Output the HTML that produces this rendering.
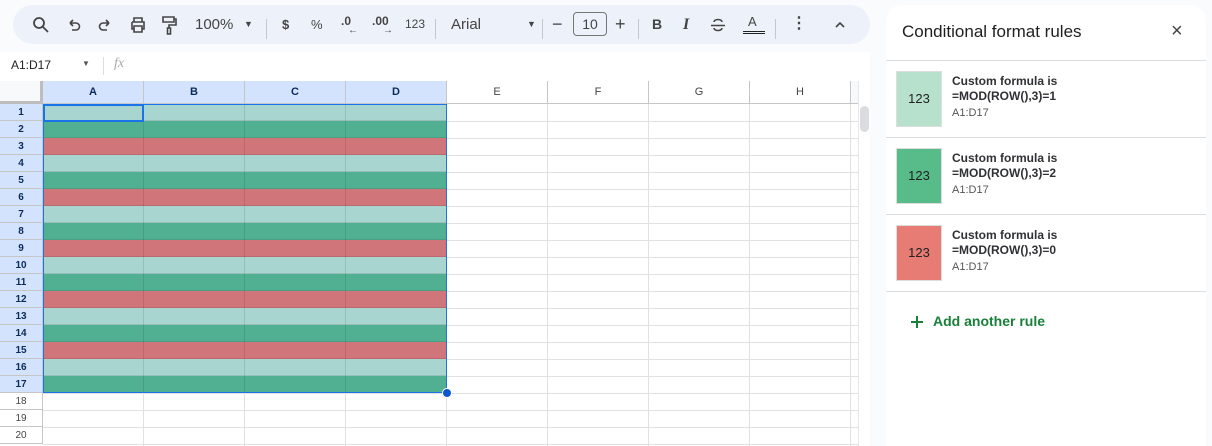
<!DOCTYPE html>
<html><head><meta charset="utf-8"><style>
*{margin:0;padding:0;box-sizing:border-box}
body{width:1212px;height:446px;background:#f9fbfd;font-family:"Liberation Sans",Arial,sans-serif;position:relative;overflow:hidden;color:#444}
.a{position:absolute}
.tb{left:13px;top:5px;width:857px;height:39px;background:#edf2fa;border-radius:20px}
.ti{position:absolute;top:0;height:39px;line-height:39px;font-size:14px;color:#444}
.sep{position:absolute;top:14px;width:1px;height:20px;background:#c7c7c7}
.grid{left:0;top:81px;width:858px;height:365px;background:#fff;overflow:hidden}
.hc{position:absolute;top:0;height:23px;line-height:23px;text-align:center;font-size:11px;border-right:1px solid #c4c7c5;border-bottom:1px solid #c4c7c5;color:#444}
.rn{position:absolute;left:0;width:43px;height:17px;line-height:17px;text-align:center;font-size:10px;border-bottom:1px solid #c4c7c5;border-right:1px solid #c4c7c5;color:#444}
.rs{background:#d3e3fd;font-weight:bold;color:#0b2a5b}
.row{position:absolute;left:43px;width:404px;height:17px;border-bottom:1px solid rgba(0,0,0,.1)}
.l{background:#a8d5d0}.g{background:#52b092}.r{background:#d0767a}
.vl{position:absolute;top:23px;width:1px;height:342px;background:#e1e1e1}
.hl{position:absolute;left:43px;width:815px;height:1px;background:#e1e1e1}
.panel{left:886px;top:5px;width:320px;height:441px;background:#fff;border-radius:16px 16px 0 0}
.card{position:absolute;left:0;width:320px;height:77px;border-bottom:1px solid #dadce0}
.sw{position:absolute;left:10px;top:10px;width:46px;height:56px;border:1px solid #ddd;text-align:center;line-height:54px;font-size:13px;color:#222}
.ct{position:absolute;left:66px;top:13px;font-size:12px;font-weight:bold;color:#303134;line-height:15px}
.cr{position:absolute;left:66px;top:46px;font-size:11px;color:#555}
</style></head><body>
<div class="a tb">
 <svg class="a" style="left:19px;top:11px" width="18" height="18" viewBox="0 0 18 18"><circle cx="7" cy="7" r="5" fill="none" stroke="#444" stroke-width="1.8"/><path d="M11 11l5 5" stroke="#444" stroke-width="1.8"/></svg>
 <svg class="a" style="left:53px;top:12px" width="16" height="16" viewBox="0 0 16 16"><path d="M4 6h6a3.5 3.5 0 010 7H6M4 6l3-3M4 6l3 3" fill="none" stroke="#444" stroke-width="1.6"/></svg>
 <svg class="a" style="left:84px;top:12px" width="16" height="16" viewBox="0 0 16 16"><path d="M12 6H6a3.5 3.5 0 000 7h4M12 6L9 3M12 6L9 9" fill="none" stroke="#444" stroke-width="1.6"/></svg>
 <svg class="a" style="left:116px;top:11px" width="18" height="18" viewBox="0 0 18 18"><path d="M5 6V2h8v4M3 6h12v7h-2M5 13H3V6M5 10h8v6H5z" fill="none" stroke="#444" stroke-width="1.6"/></svg>
 <svg class="a" style="left:148px;top:10px" width="16" height="20" viewBox="0 0 16 20"><path d="M2 2h11v5H2zM13 4h2v6H8v3M6.5 13h3v6h-3z" fill="none" stroke="#444" stroke-width="1.6"/></svg>
 <div class="ti" style="left:182px;font-size:15px">100%</div>
 <div class="ti" style="left:231px;font-size:9px">▼</div>
 <div class="sep" style="left:253px"></div>
 <div class="ti" style="left:269px;font-weight:bold;font-size:13px">$</div>
 <div class="ti" style="left:298px;font-size:13px">%</div>
 <div class="ti" style="left:328px;font-size:12px;font-weight:bold;top:-3px">.0</div><div class="ti" style="left:335px;font-size:10px;top:6px">←</div>
 <div class="ti" style="left:359px;font-size:12px;font-weight:bold;top:-3px">.00</div><div class="ti" style="left:370px;font-size:10px;top:6px">→</div>
 <div class="ti" style="left:392px;font-size:12px">123</div>
 <div class="sep" style="left:422px"></div>
 <div class="ti" style="left:438px;font-size:15px">Arial</div>
 <div class="ti" style="left:514px;font-size:9px">▼</div>
 <div class="sep" style="left:529px"></div>
 <div class="ti" style="left:539px;font-size:18px">−</div>
 <div class="a" style="left:560px;top:7px;width:34px;height:24px;border:1px solid #747775;border-radius:4px;text-align:center;line-height:22px;font-size:14px">10</div>
 <div class="ti" style="left:602px;font-size:18px">+</div>
 <div class="sep" style="left:625px"></div>
 <div class="ti" style="left:639px;font-weight:bold;font-size:14px">B</div>
 <div class="ti" style="left:670px;font-style:italic;font-family:'Liberation Serif',serif;font-size:16px;font-weight:bold">I</div>
 <svg class="a" style="left:697px;top:12px" width="16" height="16" viewBox="0 0 16 16"><path d="M4 5a4 2.5 0 018 0M1 8.5h14M4 11a4 2.5 0 008 0" fill="none" stroke="#444" stroke-width="1.6"/></svg>
 <div class="ti" style="left:735px;font-size:13px;top:-3px">A</div><div class="a" style="left:730px;top:26px;width:22px;height:3px;border-top:1px solid #222;border-bottom:1px solid #222"></div>
 <div class="sep" style="left:762px"></div>
 <div class="ti" style="left:778px;font-weight:bold;font-size:16px;line-height:37px">⋮</div>
 <svg class="a" style="left:821px;top:15px" width="12" height="10" viewBox="0 0 12 10"><path d="M2 7l4-4 4 4" fill="none" stroke="#444" stroke-width="1.6"/></svg>
</div>
<div class="a" style="left:0;top:52px;width:870px;height:29px;background:#fff"></div>
<div class="a" style="left:11px;top:58px;font-size:12px;color:#222">A1:D17</div>
<div class="a" style="left:82px;top:59px;font-size:8px;color:#555">▼</div>
<div class="a" style="left:103px;top:57px;width:1px;height:18px;background:#ddd"></div>
<div class="a" style="left:114px;top:56px;font-size:14px;color:#aaa;font-style:italic;font-family:'Liberation Serif',serif">fx</div>

<div class="a grid">
 <div class="a" style="left:0;top:0;width:43px;height:23px;background:#f8f9fa;border-right:3px solid #bdbdbd;border-bottom:3px solid #bdbdbd"></div>
 <div class="hc" style="left:43px;width:101px;background:#d3e3fd;color:#0b2a5b;font-weight:bold">A</div>
 <div class="hc" style="left:144px;width:101px;background:#d3e3fd;color:#0b2a5b;font-weight:bold">B</div>
 <div class="hc" style="left:245px;width:101px;background:#d3e3fd;color:#0b2a5b;font-weight:bold">C</div>
 <div class="hc" style="left:346px;width:101px;background:#d3e3fd;color:#0b2a5b;font-weight:bold">D</div>
 <div class="hc" style="left:447px;width:101px;background:#fff">E</div>
 <div class="hc" style="left:548px;width:101px;background:#fff">F</div>
 <div class="hc" style="left:649px;width:101px;background:#fff">G</div>
 <div class="hc" style="left:750px;width:101px;background:#fff">H</div>
 <div class="hc" style="left:851px;width:7px;background:#f8f9fa;border-right:none"></div>
 <div class="hl" style="top:40px"></div><div class="hl" style="top:57px"></div><div class="hl" style="top:74px"></div><div class="hl" style="top:91px"></div><div class="hl" style="top:108px"></div><div class="hl" style="top:125px"></div><div class="hl" style="top:142px"></div><div class="hl" style="top:159px"></div><div class="hl" style="top:176px"></div><div class="hl" style="top:193px"></div><div class="hl" style="top:210px"></div><div class="hl" style="top:227px"></div><div class="hl" style="top:244px"></div><div class="hl" style="top:261px"></div><div class="hl" style="top:278px"></div><div class="hl" style="top:295px"></div><div class="hl" style="top:312px"></div><div class="hl" style="top:329px"></div><div class="hl" style="top:346px"></div><div class="hl" style="top:363px"></div>
 <div class="vl" style="left:143px"></div><div class="vl" style="left:244px"></div><div class="vl" style="left:345px"></div><div class="vl" style="left:446px"></div><div class="vl" style="left:547px"></div><div class="vl" style="left:648px"></div><div class="vl" style="left:749px"></div><div class="vl" style="left:850px"></div>
 <div class="row l" style="top:23px"></div><div class="row g" style="top:40px"></div><div class="row r" style="top:57px"></div>
 <div class="row l" style="top:74px"></div><div class="row g" style="top:91px"></div><div class="row r" style="top:108px"></div>
 <div class="row l" style="top:125px"></div><div class="row g" style="top:142px"></div><div class="row r" style="top:159px"></div>
 <div class="row l" style="top:176px"></div><div class="row g" style="top:193px"></div><div class="row r" style="top:210px"></div>
 <div class="row l" style="top:227px"></div><div class="row g" style="top:244px"></div><div class="row r" style="top:261px"></div>
 <div class="row l" style="top:278px"></div><div class="row g" style="top:295px"></div>
 <div class="a" style="left:143px;top:23px;width:1px;height:289px;background:rgba(0,0,0,.1)"></div>
 <div class="a" style="left:244px;top:23px;width:1px;height:289px;background:rgba(0,0,0,.1)"></div>
 <div class="a" style="left:345px;top:23px;width:1px;height:289px;background:rgba(0,0,0,.1)"></div>
 <div class="a" style="left:43px;top:23px;width:404px;height:289px;border:1px solid #1a73e8"></div>
 <div class="a" style="left:43px;top:23px;width:101px;height:18px;border:2px solid #1a73e8"></div>
 <div class="a" style="left:442px;top:307px;width:10px;height:10px;border-radius:50%;background:#0b57d0;border:1px solid #fff"></div>
 <div class="rn rs" style="top:23px">1</div><div class="rn rs" style="top:40px">2</div><div class="rn rs" style="top:57px">3</div><div class="rn rs" style="top:74px">4</div><div class="rn rs" style="top:91px">5</div><div class="rn rs" style="top:108px">6</div><div class="rn rs" style="top:125px">7</div><div class="rn rs" style="top:142px">8</div><div class="rn rs" style="top:159px">9</div><div class="rn rs" style="top:176px">10</div><div class="rn rs" style="top:193px">11</div><div class="rn rs" style="top:210px">12</div><div class="rn rs" style="top:227px">13</div><div class="rn rs" style="top:244px">14</div><div class="rn rs" style="top:261px">15</div><div class="rn rs" style="top:278px">16</div><div class="rn rs" style="top:295px">17</div>
 <div class="rn" style="top:312px">18</div><div class="rn" style="top:329px">19</div><div class="rn" style="top:346px">20</div>
</div>
<div class="a" style="left:858px;top:81px;width:12px;height:365px;background:#fff;border-left:1px solid #e8e8e8"></div>
<div class="a" style="left:860px;top:106px;width:9px;height:26px;background:#dadce0;border-radius:5px"></div>

<div class="a panel">
 <div class="a" style="left:16px;top:17px;font-size:17px;color:#1f1f1f">Conditional format rules</div>
 <div class="a" style="left:285px;top:16px;font-size:20px;color:#444;line-height:20px">×</div>
 <div class="a" style="left:0;top:55px;width:320px;height:1px;background:#dadce0"></div>
 <div class="card" style="top:56px"><div class="sw" style="background:#b7e1cd">123</div><div class="ct">Custom formula is<br>=MOD(ROW(),3)=1</div><div class="cr">A1:D17</div></div>
 <div class="card" style="top:133px"><div class="sw" style="background:#57bb8a">123</div><div class="ct">Custom formula is<br>=MOD(ROW(),3)=2</div><div class="cr">A1:D17</div></div>
 <div class="card" style="top:210px"><div class="sw" style="background:#e67c73">123</div><div class="ct">Custom formula is<br>=MOD(ROW(),3)=0</div><div class="cr">A1:D17</div></div>
 <svg class="a" style="left:24px;top:310px" width="14" height="14" viewBox="0 0 14 14"><path d="M7 1v12M1 7h12" stroke="#188038" stroke-width="2"/></svg>
 <div class="a" style="left:47px;top:308px;font-size:14px;color:#188038;font-weight:bold">Add another rule</div>
</div>
</body></html>
